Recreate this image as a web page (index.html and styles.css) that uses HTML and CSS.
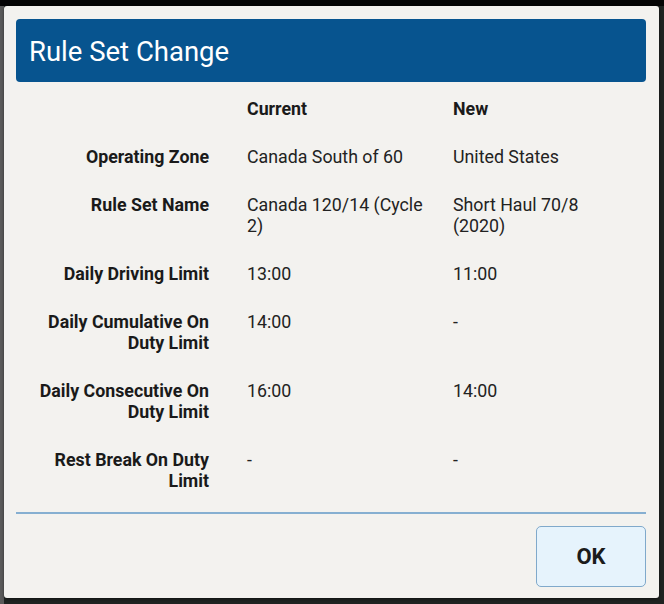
FILE: index.html
```html
<!DOCTYPE html>
<html lang="en">
<head>
<meta charset="utf-8">
<title>Rule Set Change</title>
<link rel="stylesheet" href="styles.css">
</head>
<body>
<div class="backdrop">
  <div class="dialog">
    <div class="dialog-header">Rule Set Change</div>
    <div class="rules">
      <div class="label"></div>
      <div class="colhead">Current</div>
      <div class="colhead">New</div>

      <div class="label">Operating Zone</div>
      <div class="value">Canada South of 60</div>
      <div class="value">United States</div>

      <div class="label">Rule Set Name</div>
      <div class="value">Canada 120/14 (Cycle 2)</div>
      <div class="value">Short Haul 70/8 (2020)</div>

      <div class="label">Daily Driving Limit</div>
      <div class="value">13:00</div>
      <div class="value">11:00</div>

      <div class="label">Daily Cumulative On Duty Limit</div>
      <div class="value">14:00</div>
      <div class="value">-</div>

      <div class="label">Daily Consecutive On Duty Limit</div>
      <div class="value">16:00</div>
      <div class="value">14:00</div>

      <div class="label">Rest Break On Duty Limit</div>
      <div class="value">-</div>
      <div class="value">-</div>
    </div>
    <div class="divider"></div>
    <div class="actions">
      <button class="ok-button" type="button">OK</button>
    </div>
  </div>
</div>
</body>
</html>
```
FILE: styles.css
```css
* { box-sizing: border-box; }

html, body {
  margin: 0;
  padding: 0;
  width: 664px;
  height: 604px;
  overflow: hidden;
  background: #1b1d1c;
  font-family: Roboto, "Noto Sans", "Liberation Sans", sans-serif;
}

.backdrop {
  width: 664px;
  height: 604px;
  padding: 6px 5px 6px 4px;
  background:
    linear-gradient(to bottom, #050505 0, #050505 6px, transparent 6px),
    linear-gradient(to right, #5a5a5a 0, #5a5a5a 4px, #1f2321 4px);
}

.dialog {
  height: 592px;
  background: #f3f2ef;
  border-radius: 3px;
  padding: 13px 13px 11px 12px;
  display: flex;
  flex-direction: column;
  box-shadow: 0 1px 3px rgba(0,0,0,0.5);
}

.dialog-header {
  height: 63px;
  background: #07548f;
  border-radius: 4px;
  color: #ffffff;
  font-size: 27.5px;
  line-height: 65px;
  padding-left: 13px;
}

.rules {
  display: grid;
  grid-template-columns: 219px 206px 1fr;
  row-gap: 27px;
  margin-top: 16px;
  margin-left: 12px;
  font-size: 17.8px;
  line-height: 21px;
  color: #222222;
}

.label {
  font-weight: 700;
  text-align: right;
  padding-right: 38px;
  color: #1a1a1a;
}

.colhead,
.value {
  padding-right: 20px;
}

.colhead {
  font-weight: 700;
  color: #1a1a1a;
}

.divider {
  margin-top: 21px;
  height: 1.5px;
  background: #86afd1;
}

.actions {
  margin-top: auto;
  display: flex;
  justify-content: flex-end;
}

.ok-button {
  width: 110px;
  height: 61px;
  background: #e6f3fc;
  border: 1.5px solid #80a9cb;
  border-radius: 5px;
  font-family: Roboto, "Noto Sans", "Liberation Sans", sans-serif;
  font-weight: 700;
  font-size: 22px;
  color: #1b1b1b;
  padding: 0;
}
```
